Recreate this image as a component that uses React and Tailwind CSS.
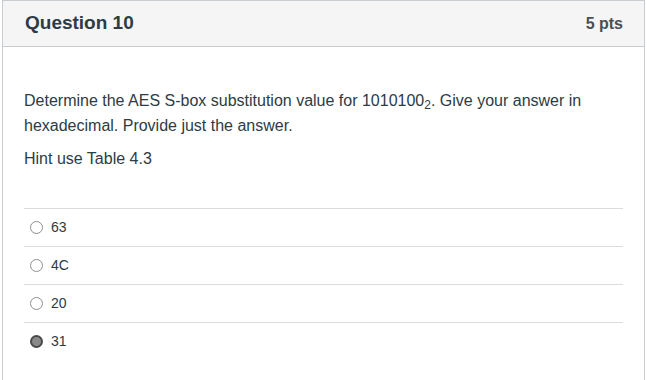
import { useState } from "react";

const answers = ["63", "4C", "20", "31"];

function Radio({ checked }) {
  return checked ? (
    <span className="w-[13px] h-[13px] rounded-full bg-[#8a8a8a] border-[2px] border-[#4a4a4a] shrink-0" />
  ) : (
    <span className="w-[13px] h-[13px] rounded-full bg-white border border-[#8f8f8f] shrink-0" />
  );
}

export default function App() {
  const [picked, setPicked] = useState("31");

  return (
    <div className="w-[647px] h-[380px] bg-white overflow-hidden" style={{ fontFamily: '"Liberation Sans", Arial, sans-serif' }}>
      <div className="ml-[2px] w-[643px] border border-[#c7cdd1] text-[#2d3b45]">
        {/* header */}
        <div className="h-[46px] bg-[#f5f5f5] border-b border-[#c7cdd1] flex items-center justify-between pl-[22px] pr-[21px]">
          <h2 className="text-[19px] font-bold">Question 10</h2>
          <span className="text-[16px] font-bold text-[#4a4f52]">5 pts</span>
        </div>

        {/* body */}
        <div className="pt-[41px] px-[21px] text-[16px] leading-[25px]">
          <p>
            Determine the AES S-box substitution value for 1010100<sub className="text-[12px] leading-none">2</sub>. Give your answer in hexadecimal. Provide just the answer.
          </p>
          <p className="mt-[8px]">Hint use Table 4.3</p>
        </div>

        <div className="mt-[37px] mx-[21px] pb-[40px]">
          {answers.map((a) => (
            <label
              key={a}
              onClick={() => setPicked(a)}
              className="h-[38px] border-t border-[#dcdcdc] flex items-center gap-[8px] pl-[6px] text-[14px] cursor-pointer"
            >
              <Radio checked={picked === a} />
              <span>{a}</span>
            </label>
          ))}
        </div>
      </div>
    </div>
  );
}
